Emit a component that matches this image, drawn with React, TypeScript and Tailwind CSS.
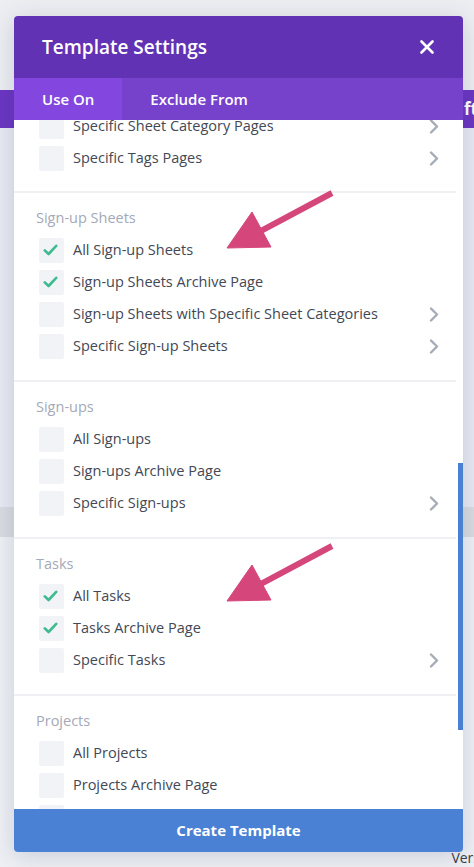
import React from "react";

interface Row {
  label: string;
  checked?: boolean;
  more?: boolean;
}

interface Section {
  title?: string;
  rows: Row[];
}

const SECTIONS: Section[] = [
  {
    rows: [
      { label: "Specific Sheet Category Pages", more: true },
      { label: "Specific Tags Pages", more: true },
    ],
  },
  {
    title: "Sign-up Sheets",
    rows: [
      { label: "All Sign-up Sheets", checked: true },
      { label: "Sign-up Sheets Archive Page", checked: true },
      { label: "Sign-up Sheets with Specific Sheet Categories", more: true },
      { label: "Specific Sign-up Sheets", more: true },
    ],
  },
  {
    title: "Sign-ups",
    rows: [
      { label: "All Sign-ups" },
      { label: "Sign-ups Archive Page" },
      { label: "Specific Sign-ups", more: true },
    ],
  },
  {
    title: "Tasks",
    rows: [
      { label: "All Tasks", checked: true },
      { label: "Tasks Archive Page", checked: true },
      { label: "Specific Tasks", more: true },
    ],
  },
  {
    title: "Projects",
    rows: [
      { label: "All Projects" },
      { label: "Projects Archive Page" },
      { label: "Specific Projects", more: true },
    ],
  },
];

function Chevron() {
  return (
    <svg width="10" height="15" viewBox="0 0 10 15" fill="none" className="mr-[1px]">
      <polyline
        points="2,1.5 8,7.5 2,13.5"
        stroke="#a5abb7"
        strokeWidth="2.4"
        strokeLinecap="round"
        strokeLinejoin="round"
      />
    </svg>
  );
}

function Check() {
  return (
    <svg width="15" height="12" viewBox="0 0 15 12" fill="none">
      <polyline
        points="1.8,6.4 5.6,10 13.2,1.8"
        stroke="#3dbb8e"
        strokeWidth="2.6"
        strokeLinecap="round"
        strokeLinejoin="round"
      />
    </svg>
  );
}

function OptionRow({ row }: { row: Row }) {
  return (
    <div className="h-[32px] flex items-center pl-[3px] pr-[16px]">
      <div className="w-[25px] h-[25px] rounded-[2px] bg-[#f1f3f7] flex items-center justify-center pr-[3px] shrink-0">
        {row.checked && <Check />}
      </div>
      <span className="ml-[9px] flex-1 text-[14.5px] text-[#434855] font-medium whitespace-nowrap">
        {row.label}
      </span>
      {row.more && <Chevron />}
    </div>
  );
}

export default function App() {
  return (
    <div
      className="relative w-[474px] h-[867px] overflow-hidden bg-[#eef0f5]"
      style={{ fontFamily: "'Open Sans', 'Liberation Sans', sans-serif" }}
    >
      {/* page behind the modal */}
      <div className="h-[90px] bg-[#eceef2]" />
      <div className="h-[38px] bg-[#6b36c3] flex justify-end items-center">
        <span className="text-white font-bold text-[17px] mr-[-4px]">⁞ft</span>
      </div>
      <div className="h-[379px] bg-[#e7eaf3]" />
      <div className="h-[30px] bg-[#d9dbe1]" />
      <div className="h-[330px] bg-[#eef0f5] flex flex-col justify-end items-end">
        <span className="text-[14px] leading-[18px] text-[#3a3d45] mr-[-6px] mb-[0px]">Vers</span>
      </div>

      {/* modal */}
      <div className="absolute left-[14px] top-[16px] w-[449px] h-[836px] rounded-[4px] overflow-hidden flex flex-col shadow-[0_4px_24px_rgba(40,50,80,0.18)]">
        <div className="h-[62px] bg-[#6232b4] flex items-center justify-between pl-[28px] pr-[29px] shrink-0">
          <span className="text-white text-[19px] font-semibold">Template Settings</span>
          <svg width="14" height="14" viewBox="0 0 14 14">
            <path d="M1.5 1.5 L12.5 12.5 M12.5 1.5 L1.5 12.5" stroke="#fff" strokeWidth="2.6" strokeLinecap="round" />
          </svg>
        </div>
        <div className="h-[42px] bg-[#7641cb] flex shrink-0">
          <div className="px-[28px] bg-[#8346df] flex items-center text-white text-[15px] font-semibold">
            Use On
          </div>
          <div className="px-[28px] flex items-center text-white text-[15px] font-semibold">
            Exclude From
          </div>
        </div>

        <div className="relative flex-1 bg-white overflow-hidden">
          <div className="mt-[-10px] pr-[7px]">
            {SECTIONS.map((s, i) => (
              <div
                key={i}
                className={
                  i > 0
                    ? "border-t-2 border-[#eef0f4] pt-[15px] pl-[22px] pb-[18px]"
                    : "pl-[22px] pb-[17px]"
                }
              >
                {s.title && (
                  <div className="h-[20px] mb-[6px] flex items-center text-[14.5px] text-[#a3a9b8]">
                    {s.title}
                  </div>
                )}
                {s.rows.map((r) => (
                  <OptionRow key={r.label} row={r} />
                ))}
              </div>
            ))}
          </div>
          <div className="absolute right-0 top-[343px] w-[5px] h-[267px] bg-[#4a80d2]" />
        </div>

        <div className="h-[43px] bg-[#4a81d4] flex items-center justify-center shrink-0">
          <span className="text-white text-[15px] font-bold">Create Template</span>
        </div>
      </div>

      {/* annotation arrows */}
      <svg className="absolute left-0 top-0 pointer-events-none" width="474" height="867">
        {[0, 353].map((dy) => (
          <g key={dy} fill="#d5467b" stroke="#d5467b">
            <line x1="332" y1={193 + dy} x2="255" y2={234 + dy} strokeWidth="6" />
            <polygon points={`227,${248 + dy} 252,${212 + dy} 271,${247 + dy}`} strokeWidth="1" />
          </g>
        ))}
      </svg>
    </div>
  );
}
